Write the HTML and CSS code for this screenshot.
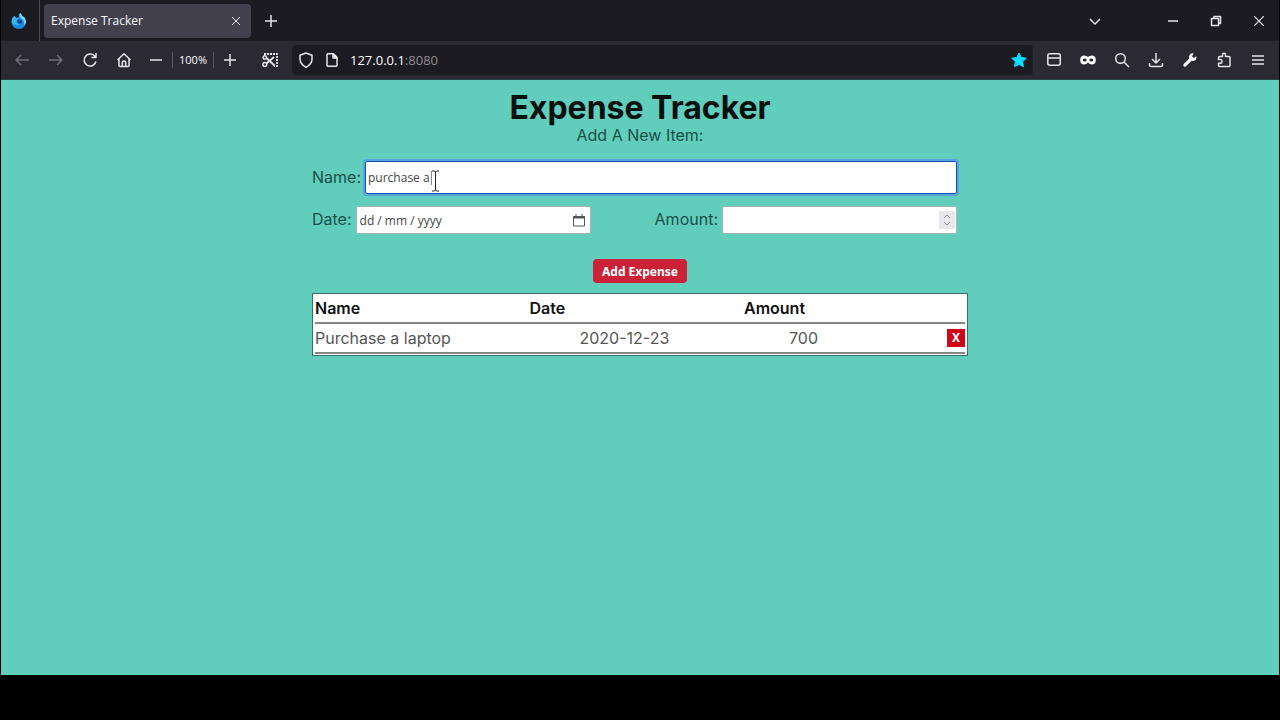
FILE: index.html
```html
<!DOCTYPE html>
<html lang="en">
<head>
    <meta charset="UTF-8">
    <meta name="viewport" content="width=device-width, initial-scale=1.0">
    <title>Expense Tracker</title>
    <link rel="stylesheet" href="styles.css">
</head>
<body>
    <div class="tab-bar">
        <div class="pinned">
            <svg width="18" height="18" viewBox="0 0 18 18">
                <path d="M2 7 Q3 4.500 4.500 4 L6 6 Q8 5 9 5 Q8 3 10 1 Q11.500 2 12 4 Q15.500 5 16 10 Q15 17 9 17 Q2 16.500 1.500 10Z" fill="#1c8be0"/>
                <path d="M10 1 Q11.500 2 12 4 Q15.500 5 16 10 Q15.500 12 14 13.500 Q15 8 11 6.500 Q8.500 4 10 1Z" fill="#6fdcf8"/>
                <path d="M2 7 Q3 4.500 4.500 4 L6 6 L8.500 6 L6.500 8.500 Q6 12 10 12.500 Q5 14 1.700 11Z" fill="#35b6f2"/>
                <path d="M8.500 7 L12 8 Q12.500 11.500 9.500 12 Q7 11 7 9Z" fill="#174f9f"/>
            </svg>
        </div>
        <div class="tab">
            <span>Expense Tracker</span>
            <button class="icon-btn tab-close" aria-label="Close tab"><svg width="8" height="8" viewBox="0 0 8 8"><path d="M0 0l8 8M8 0L0 8"/></svg></button>
        </div>
        <button class="icon-btn" aria-label="New tab"><svg width="12" height="12" viewBox="0 0 12 12"><path d="M6 0v12M0 6h12"/></svg></button>
        <div class="window-buttons">
            <button class="icon-btn list-tabs" aria-label="List all tabs"><svg width="12" height="12" viewBox="0 0 12 12"><path d="M1 4l5 5 5-5"/></svg></button>
            <button class="icon-btn" aria-label="Minimize"><svg width="10" height="10" viewBox="0 0 10 10"><path d="M0 5h10"/></svg></button>
            <button class="icon-btn" aria-label="Restore"><svg width="12" height="12" viewBox="0 0 12 12"><path d="M1.500 3.500h7v7h-7zM4 3.500v-2h6.500v7h-2"/></svg></button>
            <button class="icon-btn" aria-label="Close"><svg width="10" height="10" viewBox="0 0 10 10"><path d="M0 0l10 10M10 0L0 10" stroke-width="1.200"/></svg></button>
        </div>
    </div>

    <div class="toolbar">
        <div class="nav-buttons">
            <button class="icon-btn dim" aria-label="Back"><svg width="16" height="16" viewBox="0 0 16 16"><path d="M15 8H2M7 3L2 8l5 5"/></svg></button>
            <button class="icon-btn dim" aria-label="Forward"><svg width="16" height="16" viewBox="0 0 16 16"><path d="M1 8h13M9 3l5 5-5 5"/></svg></button>
            <button class="icon-btn" aria-label="Reload"><svg width="16" height="16" viewBox="0 0 16 16"><path d="M13 4.500A6 6 0 1 0 14 9.500M14 1v4.500H9.500"/></svg></button>
            <button class="icon-btn" aria-label="Home"><svg width="16" height="16" viewBox="0 0 16 16"><path d="M1.500 8L8 1.800 14.500 8M3 7v6.500q0 1 1 1h8q1 0 1-1V7M6.300 14v-3.500q0-1.500 1.700-1.500t1.700 1.500V14"/></svg></button>
        </div>
        <div class="zoom">
            <button class="icon-btn" aria-label="Zoom out"><svg width="12" height="12" viewBox="0 0 12 12"><path d="M0 6h12"/></svg></button>
            <button class="zoom-value">100%</button>
            <button class="icon-btn" aria-label="Zoom in"><svg width="12" height="12" viewBox="0 0 12 12"><path d="M6 0v12M0 6h12"/></svg></button>
        </div>
        <button class="icon-btn" aria-label="Screenshot">
            <svg width="16" height="16" viewBox="0 0 16 16">
                <path d="M2 2h13v12h-3" stroke-width="1.800" stroke-dasharray="2 1"/>
                <path d="M4.500 6l8 7.500M4.500 11.500L12 5" stroke-width="1.800"/>
                <circle cx="2.800" cy="5.500" r="1.700"/><circle cx="2.800" cy="12.500" r="1.900"/>
            </svg>
        </button>
        <div class="url-bar">
            <svg width="16" height="16" viewBox="0 0 16 16"><path d="M8 1l6 2.300V7q0 5-6 8.300Q2 12 2 7V3.300z"/></svg>
            <svg width="16" height="16" viewBox="0 0 16 16"><path d="M4 1.800h5.500L13 5.300v8q0 1-1 1H4q-1 0-1-1V2.800q0-1 1-1z"/><path d="M9 2v4h4z" fill="#e4e4ea"/></svg>
            <span class="url">127.0.0.1<span class="port">:8080</span></span>
            <svg class="star" width="16" height="16" viewBox="0 0 16 16"><path d="M8 1l2.200 4.500 5 .7-3.600 3.500.9 5L8 12.400l-4.500 2.300.9-5L.8 6.200l5-.7z"/></svg>
        </div>
        <div class="extensions">
            <button class="icon-btn" aria-label="Container"><svg width="16" height="16" viewBox="0 0 16 16"><rect x="1.800" y="1.800" width="12.500" height="11.500" rx="2"/><path d="M2 6h12"/></svg></button>
            <button class="icon-btn" aria-label="Private mask"><svg width="16" height="16" viewBox="0 0 16 16"><path d="M8 5Q6.500 3.500 4 3.500 .2 3.500 .2 8T4 12.500q2.500 0 4-2 1.500 2 4 2 3.800 0 3.800-4.500T12 3.500Q9.500 3.500 8 5zM4.700 6.500q2 0 2 1.500t-2 1.500-2-1.500 2-1.500zm6.600 0q2 0 2 1.500t-2 1.500-2-1.500 2-1.500z" fill="#fbfbfe" fill-rule="evenodd" stroke="none"/></svg></button>
            <button class="icon-btn" aria-label="Search"><svg width="16" height="16" viewBox="0 0 16 16"><circle cx="6.500" cy="6.500" r="4.800"/><path d="M10 10l5 5"/></svg></button>
            <button class="icon-btn" aria-label="Downloads"><svg width="16" height="16" viewBox="0 0 16 16"><path d="M8 1v9.500M4 7l4 4 4-4M1.500 11v2q0 1.500 1.500 1.500h10q1.500 0 1.500-1.500v-2"/></svg></button>
            <button class="icon-btn" aria-label="Developer tools"><svg width="16" height="16" viewBox="0 0 16 16"><path d="M14.300 4.200L11.800 6 10 4.200 11.800 1.500Q8.500.8 7.300 3.500q-.6 1.500 0 3L1.700 12q-1 1.200 0 2.300t2.300 0l5.600-5.600q2.200.8 4-.7 1.400-1.600.7-3.800z" fill="#fbfbfe" stroke="none"/></svg></button>
            <button class="icon-btn" aria-label="Extensions"><svg width="16" height="16" viewBox="0 0 16 16"><path d="M2.500 7.500V5.500q0-1 1-1h3V2.800q0-1.500 1.500-1.500t1.500 1.500v1.700H13q1 0 1 1v8q0 1-1 1H3.500q-1 0-1-1v-2.300h2q1.500 0 1.500-1.800T4.500 7.500z"/></svg></button>
            <button class="icon-btn" aria-label="Menu"><svg width="14" height="14" viewBox="0 0 14 14"><path d="M1 3h12M1 7h12M1 11h12"/></svg></button>
        </div>
    </div>

    <main>
        <div class="container">
            <h1>Expense Tracker</h1>
            <p class="subtitle">Add A New Item:</p>

            <form class="expense-form">
                <div class="row">
                    <label for="name">Name:</label>
                    <div class="name-field">
                        <input type="text" id="name" value="purchase a " autocomplete="off">
                        <span class="caret"></span>
                        <svg class="pointer" width="9" height="22" viewBox="0 0 9 22"><path d="M1 1h2.500l1 1 1-1H8M4.500 2v18M1 21h2.500l1-1 1 1H8" stroke="#fff" stroke-width="3"/><path d="M1 1h2.500l1 1 1-1H8M4.500 2v18M1 21h2.500l1-1 1 1H8"/></svg>
                    </div>
                </div>
                <div class="row split">
                    <div class="group">
                        <label for="date">Date:</label>
                        <div class="field">
                            <input type="text" id="date" placeholder="dd / mm / yyyy">
                            <button type="button" class="calendar" aria-label="Choose date"><svg width="12" height="13" viewBox="0 0 12 13"><path d="M.5 2.500h11v9.500H.5z"/><path d="M0 3.500h12" stroke-width="2"/><path d="M3 0v3M9 0v3"/></svg></button>
                        </div>
                    </div>
                    <div class="group">
                        <label for="amount">Amount:</label>
                        <div class="field">
                            <input type="number" id="amount">
                            <span class="spinner"><svg width="8" height="14" viewBox="0 0 8 14"><path d="M1 5l3-3 3 3M1 9l3 3 3-3"/></svg></span>
                        </div>
                    </div>
                </div>
                <button type="button" class="add-btn">Add Expense</button>
            </form>

            <table class="expenses">
                <thead>
                    <tr>
                        <th class="col">Name</th>
                        <th class="col">Date</th>
                        <th colspan="2">Amount</th>
                    </tr>
                </thead>
                <tbody>
                    <tr>
                        <td>Purchase a laptop</td>
                        <td class="date">2020-12-23</td>
                        <td class="amount">700</td>
                        <td class="action"><button class="delete-btn" aria-label="Delete expense">X</button></td>
                    </tr>
                </tbody>
            </table>
        </div>
    </main>
    <footer></footer>
</body>
</html>
```
FILE: styles.css
```css
* {
    box-sizing: border-box;
}
body {
    margin: 0;
    padding: 0 1px;
    min-height: 100vh;
    display: flex;
    flex-direction: column;
    background-color: #000;
    font-family: Inter, "Liberation Sans", sans-serif;
}
button {
    font-family: inherit;
    border: none;
    padding: 0;
    cursor: pointer;
}
svg {
    display: block;
    flex-shrink: 0;
    fill: none;
    stroke: #e4e4ea;
    stroke-width: 1.500;
    stroke-linejoin: round;
}

/* browser window */
.tab-bar {
    height: 41px;
    display: flex;
    align-items: center;
    background-color: #1c1b22;
}
.icon-btn {
    background: none;
    width: 32px;
    height: 32px;
    display: flex;
    align-items: center;
    justify-content: center;
}
.dim svg {
    stroke: #706f78;
}
.pinned {
    width: 39px;
    height: 100%;
    display: flex;
    align-items: center;
    padding-left: 9px;
    border-right: 1px solid #4a4952;
}
.pinned svg {
    stroke: none;
}
.tab {
    width: 207px;
    height: 34px;
    margin: 0 4px;
    padding-left: 7px;
    display: flex;
    align-items: center;
    justify-content: space-between;
    border-radius: 4px;
    background-color: #42414d;
    color: #fbfbfe;
    font-family: "Open Sans", sans-serif;
    font-size: 12px;
}
.tab-close {
    width: 30px;
}
.tab-close svg {
    stroke-width: 1;
}
.window-buttons {
    margin-left: auto;
    padding-right: 4px;
    display: flex;
    gap: 11px;
}
.list-tabs {
    margin-right: 35px;
}
.toolbar {
    height: 39px;
    padding: 0 5px;
    display: flex;
    align-items: center;
    background-color: #2b2a33;
    border-bottom: 1px solid #244544;
}
.nav-buttons {
    display: flex;
    gap: 2px;
}
.zoom {
    display: flex;
    align-items: center;
}
.zoom-value {
    width: 42px;
    height: 16px;
    background: none;
    border-left: 1px solid #5b5a63;
    border-right: 1px solid #5b5a63;
    color: #fbfbfe;
    font-family: "Open Sans", sans-serif;
    font-size: 11px;
    line-height: 16px;
}
.toolbar > .icon-btn {
    margin: 0 6px 0 8px;
}
.url-bar {
    flex: 1;
    height: 30px;
    padding: 0 6px;
    display: flex;
    align-items: center;
    gap: 10px;
    border-radius: 4px;
    background-color: #1c1b22;
    color: #fbfbfe;
    font-family: "Open Sans", sans-serif;
    font-size: 13px;
}
.port {
    color: #8f8e97;
}
.star {
    margin-left: auto;
    fill: #00ddff;
    stroke: #00ddff;
    stroke-width: 1;
}
.extensions {
    margin-left: 5px;
    display: flex;
    gap: 2px;
}

/* page */
main {
    flex: 1;
    background-color: #61cdbd;
}
footer {
    height: 45px;
}
.container {
    max-width: 656px;
    margin: 0 auto;
    padding-top: 9px;
}
h1 {
    margin: 0;
    font-size: 32px;
    line-height: 38px;
    text-align: center;
    color: #04100e;
}
.subtitle {
    margin: 0;
    font-size: 16px;
    line-height: 16px;
    text-align: center;
    color: #1a4f47;
}
.expense-form {
    padding-top: 18px;
}
.row {
    display: flex;
    align-items: center;
    gap: 4px;
    margin-right: 11px;
}
.row label {
    padding-bottom: 2px;
    font-size: 16px;
    color: #1a4f47;
}
.name-field {
    position: relative;
    flex: 1;
}
.name-field input {
    display: block;
    width: 100%;
    height: 33px;
    padding: 0 2px;
    border: 1px solid #1450b0;
    outline: 2px solid #58a4dd;
    border-radius: 2px;
    color: #444;
    font-family: "Open Sans", sans-serif;
    font-size: 12px;
}
.caret {
    position: absolute;
    left: 66px;
    top: 10px;
    width: 1px;
    height: 14px;
    background-color: #888;
}
.pointer {
    position: absolute;
    left: 66px;
    top: 9px;
    stroke: #222;
    stroke-width: 1;
}
.split {
    margin-top: 12px;
    gap: 64px;
}
.group {
    flex: 1 1 auto;
    display: flex;
    align-items: center;
    gap: 4px;
}
.field {
    flex: 1;
    height: 28px;
    display: flex;
    align-items: center;
    border: 1px solid #a3b5b1;
    background-color: #fff;
}
.field input {
    flex: 1;
    min-width: 0;
    width: 160px;
    padding: 0 3px;
    border: none;
    outline: none;
    background: none;
    color: #444;
    font-family: "Open Sans", sans-serif;
    font-size: 12px;
    appearance: textfield;
}
.field input::placeholder {
    color: #444;
}
.calendar {
    background: none;
    margin-right: 5px;
}
.calendar svg {
    stroke: #555;
    stroke-width: 1;
}
.spinner {
    width: 16px;
    height: 18px;
    margin-right: 1px;
    display: flex;
    align-items: center;
    justify-content: center;
    background-color: #e9e9ed;
}
.spinner svg {
    stroke: #85858c;
    stroke-width: 1;
}
.add-btn {
    display: block;
    width: 94px;
    height: 24px;
    margin: 25px auto 0;
    border-radius: 4px;
    background-color: #cc2238;
    color: #fff;
    font-family: "Noto Sans", sans-serif;
    font-size: 12px;
    font-weight: 700;
}
.expenses {
    width: 100%;
    margin-top: 10px;
    padding: 0 2px 1px;
    border: 1px solid #3c6f67;
    border-spacing: 0;
    table-layout: fixed;
    background-color: #fff;
    font-size: 16px;
}
.expenses th,
.expenses td {
    height: 30px;
    padding: 0;
    border-bottom: 2px solid #858585;
    text-align: left;
    white-space: nowrap;
}
.expenses th {
    color: #111;
    font-weight: 600;
}
.expenses td {
    color: #555;
}
.expenses .col {
    width: 33%;
}
.expenses .date {
    padding-left: 50px;
}
.expenses .amount {
    padding-left: 45px;
}
.expenses .action {
    text-align: right;
}
.delete-btn {
    display: block;
    width: 18px;
    height: 18px;
    margin-left: auto;
    background-color: #cf0618;
    color: #fff;
    font-family: "Noto Sans", sans-serif;
    font-size: 12px;
    font-weight: 700;
    line-height: 18px;
}
```
